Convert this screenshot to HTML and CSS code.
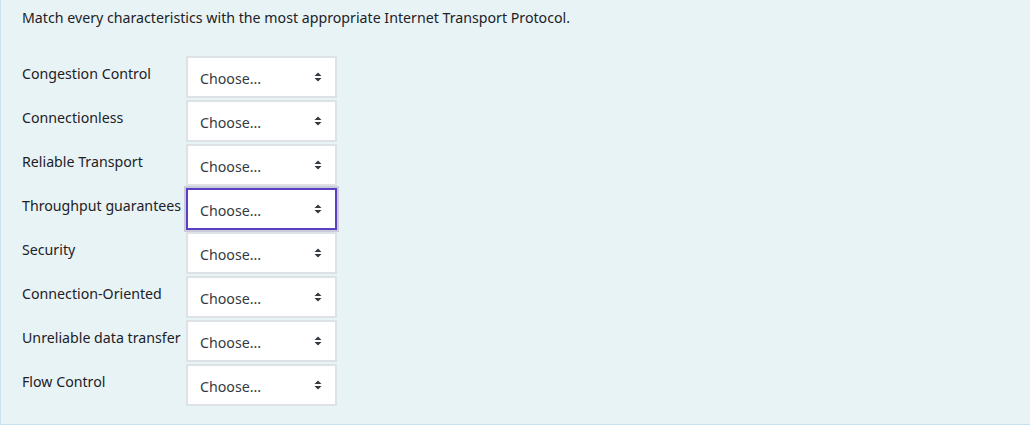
FILE: index.html
```html
<!DOCTYPE html>
<html>
<head>
<meta charset="utf-8">
<link rel="stylesheet" href="styles.css">
</head>
<body>
<div class="question">
  <p class="prompt">Match every characteristics with the most appropriate Internet Transport Protocol.</p>
  <div class="rows">
    <div class="row"><span class="label">Congestion Control</span><select class="choice"><option>Choose...</option></select></div>
    <div class="row"><span class="label">Connectionless</span><select class="choice"><option>Choose...</option></select></div>
    <div class="row"><span class="label">Reliable Transport</span><select class="choice"><option>Choose...</option></select></div>
    <div class="row"><span class="label">Throughput guarantees</span><select class="choice focused"><option>Choose...</option></select></div>
    <div class="row"><span class="label">Security</span><select class="choice"><option>Choose...</option></select></div>
    <div class="row"><span class="label">Connection-Oriented</span><select class="choice"><option>Choose...</option></select></div>
    <div class="row"><span class="label">Unreliable data transfer</span><select class="choice"><option>Choose...</option></select></div>
    <div class="row"><span class="label">Flow Control</span><select class="choice"><option>Choose...</option></select></div>
  </div>
</div>
</body>
</html>
```
FILE: styles.css
```css
html, body {
  margin: 0;
  padding: 0;
  background: #ffffff;
}
body {
  font-family: "Noto Sans", sans-serif;
  color: #1d2125;
  width: 1030px;
  height: 425px;
  overflow: hidden;
}
.question {
  background: #e8f3f6;
  border-left: 1px solid #cde4ec;
  border-bottom: 1px solid #c6e2ee;
  width: 1040px;
  height: 425px;
  box-sizing: border-box;
  padding: 8px 21px 0 21px;
}
.prompt {
  margin: 0;
  font-size: 14.2px;
  line-height: 20px;
}
.rows {
  display: flex;
  flex-direction: column;
  gap: 2px;
  margin-top: 28px;
}
.row {
  display: flex;
  align-items: flex-start;
  height: 42px;
}
.label {
  width: 164px;
  font-size: 14.2px;
  line-height: 20px;
  padding-top: 8px;
  white-space: nowrap;
}
.choice {
  appearance: none;
  -webkit-appearance: none;
  width: 151px;
  height: 42px;
  box-sizing: border-box;
  border: 2px solid #dee2e6;
  border-radius: 0;
  background-color: #fff;
  background-image: url("data:image/svg+xml;utf8,<svg xmlns='http://www.w3.org/2000/svg' width='8' height='10' viewBox='0 0 8 10'><path d='M0.5 4 L4 0.5 L7.5 4 Z M0.5 6 L4 9.5 L7.5 6 Z' fill='%23343a40'/></svg>");
  background-repeat: no-repeat;
  background-position: right 13px center;
  background-size: 8px 10px;
  font-family: "Noto Sans", sans-serif;
  font-size: 14.2px;
  color: #343a40;
  padding: 2px 0 0 12px;
  margin: 0;
  outline: none;
}
.choice.focused {
  border-color: #5b3ec2;
  box-shadow: 0 0 0 2px #c9ccd9;
}
```
